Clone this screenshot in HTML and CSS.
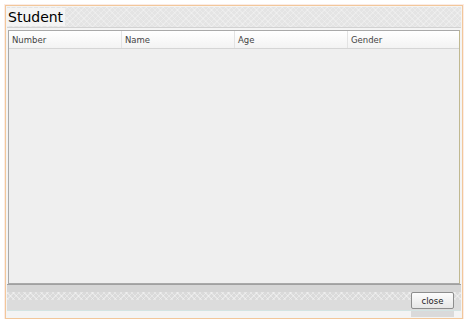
FILE: index.html
```html
<!DOCTYPE html>
<html lang="en">
<head>
  <meta charset="UTF-8">
  <title>Student</title>
  <link rel="stylesheet" href="styles.css">
</head>
<body>

  <div class="ventana">
    <div class="titulo"><span>Student</span></div>
    <div class="tabla">
      <div class="cabecera">
        <div class="columna">Number</div>
        <div class="columna">Name</div>
        <div class="columna">Age</div>
        <div class="columna">Gender</div>
      </div>
      <div class="cuerpo"></div>
    </div>
    <div class="pie">
      <button class="boton">close</button>
    </div>
    <div class="base">
      <div class="sombra"></div>
    </div>
  </div>

</body>
</html>
```

FILE: styles.css
```css
body {
  margin: 0;
  background-color: #fff;
  font-family: Tahoma, "DejaVu Sans", sans-serif;
}

.ventana {
  margin: 5px 0 0 5px;
  width: 458px;
  height: 314px;
  border: 1px solid #f2c79a;
  outline: 1px solid #fbece6;
  background-color: #f4f4f4;
  display: flex;
  flex-direction: column;
  padding: 1px;
  box-sizing: border-box;
}

.titulo {
  height: 20px;
  background-color: #e4e4e4;
  background-image: repeating-linear-gradient(45deg, rgba(255,255,255,0.25) 0 1px, transparent 1px 4px),
                    repeating-linear-gradient(-45deg, rgba(255,255,255,0.25) 0 1px, transparent 1px 4px);
  border-bottom: 1px solid #d2d2d2;
  display: flex;
  align-items: center;
}

.titulo span {
  font-family: "DejaVu Sans", sans-serif;
  font-size: 14px;
  color: #000;
  background-color: #f4f4f4;
  padding: 0 2px 0 1px;
  line-height: 18px;
}

.tabla {
  margin: 2px 1px 0 1px;
  height: 254px;
  box-sizing: border-box;
  border: 1px solid #a9a9a9;
  border-right-color: #c0b890;
  display: flex;
  flex-direction: column;
}

.cabecera {
  display: flex;
  height: 17px;
  background: linear-gradient(#ffffff, #f3f3f3);
  border-bottom: 1px solid #d5d5d5;
}

.columna {
  width: 113px;
  border-right: 1px solid #e3e3e3;
  font-family: "DejaVu Sans", sans-serif;
  font-size: 8.5px;
  color: #444;
  padding: 4px 0 0 3px;
  box-sizing: border-box;
}

.columna:last-child {
  flex: 1;
  border-right: none;
}

.cuerpo {
  flex: 1;
  background-color: #efefef;
}

.pie {
  height: 24px;
  background-color: #dadada;
  background-image: linear-gradient(#d6d6d6 0 7px, transparent 7px 15px, #dcdcdc 15px),
                    repeating-linear-gradient(45deg, rgba(255,255,255,0.35) 0 1px, transparent 1px 4px),
                    repeating-linear-gradient(-45deg, rgba(255,255,255,0.35) 0 1px, transparent 1px 4px);
  border-top: 1px solid #a0a0a0;
  border-bottom: 1px solid #d4e4e2;
  display: flex;
  justify-content: flex-end;
  align-items: flex-end;
  padding: 0 7px 1px 0;
}

.boton {
  width: 43px;
  height: 17px;
  border: 1px solid #8d8d8d;
  border-radius: 2px;
  background: linear-gradient(#fdfdfd, #e6e6e6);
  font-family: "DejaVu Sans", sans-serif;
  font-size: 8.5px;
  color: #222;
  padding: 0;
  cursor: pointer;
}

.base {
  flex: 1;
  display: flex;
  justify-content: flex-end;
  padding-right: 7px;
  background-color: #f4f4f4;
}

.sombra {
  width: 43px;
  background-color: #dadada;
}
```
